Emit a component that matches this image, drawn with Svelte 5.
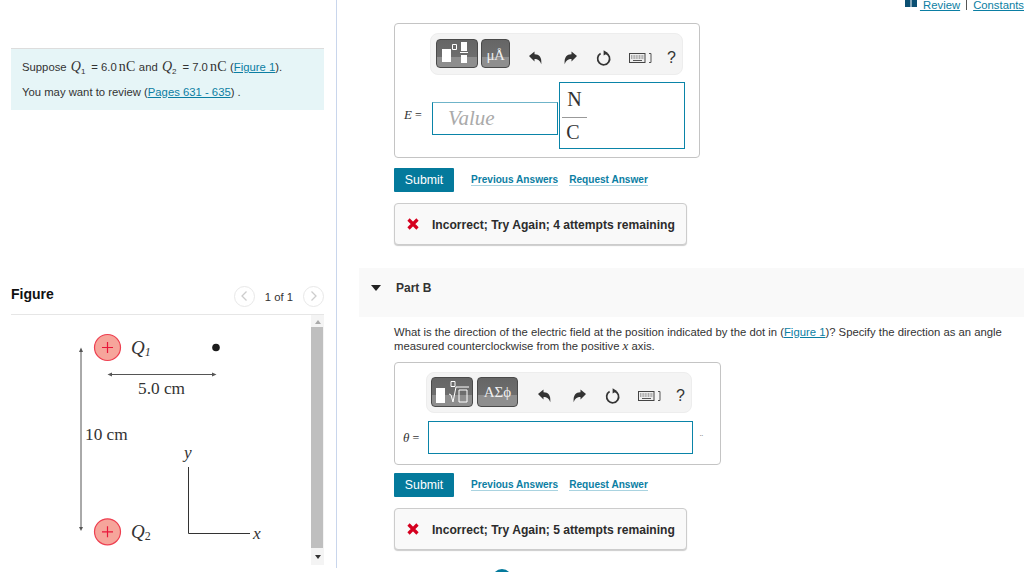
<script>
  const parts = [
    { attempts: 4 },
    { attempts: 5 }
  ];
</script>

{#snippet tools()}
  <svg class="tool" width="16" height="16" viewBox="0 0 16 16"><path d="M1 6 L6.500 1.500 V4.300 C11 4.200 14 7 13.300 14.200 C12 10.500 10 9 6.500 9 V11.500 Z" fill="#333"/></svg>
  <svg class="tool" width="16" height="16" viewBox="0 0 16 16"><path d="M15 6 L9.500 1.500 V4.300 C5 4.200 2 7 2.700 14.200 C4 10.500 6 9 9.500 9 V11.500 Z" fill="#333"/></svg>
  <svg class="tool" width="16" height="16" viewBox="0 0 16 16"><path d="M9.600 3.100 A6 6 0 1 1 4.600 3.600" fill="none" stroke="#333" stroke-width="1.700"/><path d="M7.600 .2 L12 3 L7.600 5.600 Z" fill="#333"/></svg>
  <svg class="kbd" width="24" height="12" viewBox="0 0 24 12">
    <rect x=".5" y="1.500" width="15.500" height="9" fill="#eee" stroke="#444"/>
    <path d="M2 4h13M2 6h13" stroke="#666" stroke-dasharray="1 .6"/>
    <path d="M4 8.500h9" stroke="#555"/>
    <path d="M20 1.500h2v9h-2" fill="none" stroke="#555"/>
  </svg>
  <span class="help">?</span>
{/snippet}

{#snippet answerRow(n)}
  <div class="actions">
    <button class="submit">Submit</button>
    <a href="#p" class="action">Previous Answers</a>
    <a href="#r" class="action">Request Answer</a>
  </div>
  <div class="feedback">
    <svg width="12" height="12" viewBox="0 0 12 12"><path d="M1.500 1.500 L10.500 10.500 M10.500 1.500 L1.500 10.500" stroke="#d5001f" stroke-width="3.200"/></svg>
    <span>Incorrect; Try Again; {n} attempts remaining</span>
  </div>
{/snippet}

<div class="page">
  <aside class="left">
    <div class="intro">
      <p>Suppose <i class="m q">Q</i><sub>1</sub><span class="eq">= 6.0</span><span class="u">nC</span> and <i class="m q">Q</i><sub>2</sub><span class="eq">= 7.0</span><span class="u">nC</span> (<a href="#f">Figure 1</a>).</p>
      <p>You may want to review (<a href="#pg">Pages 631 - 635</a>) .</p>
    </div>

    <div class="fighead">
      <h2>Figure</h2>
      <div class="pager">
        <span class="circ"><svg width="8" height="12" viewBox="0 0 8 12"><path d="M6.500 1.500 L2 6 L6.500 10.500" fill="none" stroke="#ccc" stroke-width="1.300"/></svg></span>
        <span class="count">1 of 1</span>
        <span class="circ"><svg width="8" height="12" viewBox="0 0 8 12"><path d="M1.500 1.500 L6 6 L1.500 10.500" fill="none" stroke="#ccc" stroke-width="1.300"/></svg></span>
      </div>
    </div>

    <div class="figure">
      <svg class="diagram" width="300" height="252" viewBox="11 314 300 252">
        <g stroke="#555" fill="#555">
          <path d="M81 349 V528" stroke-width="1" />
          <path d="M81 346.500 L79 351 H83 Z M81 530 L79 526 H83 Z" stroke="none"/>
          <path d="M109 373.500 H215" stroke-width="1"/>
          <path d="M107.500 373.500 L112 371.500 V375.500 Z M216.500 373.500 L212 371.500 V375.500 Z" stroke="none"/>
        </g>
        <circle cx="107.500" cy="346.500" r="13" fill="#f6a59b" stroke="#ee3f50" stroke-width="1.200"/>
        <path d="M102 346.500 H113 M107.500 341 V352" stroke="#e8173a" stroke-width="1.200"/>
        <circle cx="107.500" cy="530.800" r="13" fill="#f6a59b" stroke="#ee3f50" stroke-width="1.200"/>
        <path d="M102 530.800 H113 M107.500 525.300 V536.300" stroke="#e8173a" stroke-width="1.200"/>
        <circle cx="216" cy="346.500" r="3.800" fill="#1c1c1c"/>
        <path d="M188.500 466 V532.500 H250" fill="none" stroke="#333" stroke-width="1"/>
        <g class="dt">
          <text x="131" y="353" class="it big">Q<tspan class="sb" dy="2">1</tspan></text>
          <text x="131" y="537" class="it big">Q<tspan class="sb up2" dy="2">2</tspan></text>
          <text x="138" y="392.500" class="wider">5.0 cm</text>
          <text x="85" y="439" class="wider">10 cm</text>
          <text x="184" y="457" class="it wider">y</text>
          <text x="253" y="538" class="it wider">x</text>
        </g>
      </svg>
      <div class="scrollbar">
        <span class="up"></span>
        <span class="thumb"></span>
        <span class="down"></span>
      </div>
    </div>
  </aside>

  <main class="right">
    <div class="topbar">
      <svg width="12" height="8" viewBox="0 0 12 8"><path d="M0 0h5.500v7H0zM6.500 0H12v7H6.500z" fill="#0b4f72"/></svg>
      <a href="#rv" class="review">&nbsp;Review</a>
      <span class="sep"></span>
      <a href="#c">Constants</a>
    </div>

    <section class="content">
      <div class="answer a1">
        <div class="toolbar tb1">
          <span class="tbtn b42">
            <svg width="42" height="29" viewBox="0 0 42 29"><path d="M6 10h9v13H6zM25 3h6v9h-6z" fill="#fff"/><path d="M16.500 5.500h4v5h-4z" fill="none" stroke="#fff"/><path d="M24 13.500h8" stroke="#fff"/><path d="M25 16h6v8h-6z" fill="#fff"/></svg>
          </span>
          <span class="tbtn glyph g1 b29">μÅ</span>
          <div class="icons i1">{@render tools()}</div>
        </div>
        <div class="eqrow">
          <span class="eqlabel"><i class="m">E</i> =</span>
          <span class="field value">Value</span>
          <div class="units">
            <span class="frac"><span class="nu">N</span><span class="de">C</span></span>
          </div>
        </div>
      </div>
      {@render answerRow(parts[0].attempts)}
    </section>

    <section class="partb">
      <div class="band">
        <svg width="10" height="6" viewBox="0 0 10 6"><path d="M0 0h10L5 6z" fill="#222"/></svg>
        <span>Part B</span>
      </div>
      <div class="content">
        <div class="question">
          <p>What is the direction of the electric field at the position indicated by the dot in (<a href="#f1">Figure 1</a>)? Specify the direction as an angle</p>
          <p>measured counterclockwise from the positive <i class="m">x</i> axis.</p>
        </div>
        <div class="answer a2">
          <div class="toolbar tb2">
            <span class="tbtn b42">
              <svg width="42" height="30" viewBox="0 0 42 30"><path d="M5 11h9v15H5z" fill="#fff"/><path d="M20 4.500h4v5h-4z" fill="none" stroke="#fff"/><path d="M18 17l2 1 2 7 3-15h13M28 13h8v12h-8z" fill="none" stroke="#fff"/></svg>
            </span>
            <span class="tbtn glyph b41">ΑΣϕ</span>
            <div class="icons i2">{@render tools()}</div>
          </div>
          <div class="eqrow2">
            <span class="eqlabel"><i class="m">θ</i> =</span>
            <span class="field wide"></span>
            <span class="mark">¨</span>
          </div>
        </div>
        <div class="gap2">{@render answerRow(parts[1].attempts)}</div>
      </div>
    </section>
    <span class="peek"></span>
  </main>
</div>

<style>
  :global(body) { margin: 0; background: #fff; font-family: "Liberation Sans", Arial, sans-serif; color: #333; overflow: hidden; }
  a { color: #0b7ea3; text-decoration: underline; text-underline-offset: 1px; }
  p { margin: 0; }
  .page { display: flex; width: 1024px; height: 572px; overflow: hidden; }
  .left { width: 337px; height: 568px; flex: none; box-sizing: border-box; border-right: 1px solid #c9d6ec; padding: 48px 12px 0 11px; }
  .intro { background: #e6f5f7; border-top: 1px solid #ddd; height: 62px; box-sizing: border-box; padding: 11px 11px 0; font-size: 11.300px; }
  .intro p { height: 25px; line-height: 14px; white-space: nowrap; }
  .m { font-family: "Liberation Serif", serif; font-style: italic; font-size: 13px; }
  .q { font-size: 14px; margin-left: 1px; }
  .eq { margin-left: 6px; margin-right: 2px; }
  .u { font-family: "Liberation Serif", serif; font-size: 14px; letter-spacing: .3px; }
  sub { font-size: 8px; line-height: 0; }
  .fighead { display: flex; justify-content: space-between; align-items: center; height: 47px; margin-top: 158px; border-bottom: 1px solid #e6e6e6; box-sizing: border-box; }
  h2 { margin: 0; font-size: 14px; color: #111; line-height: 15px; padding-top: 6px; }
  .pager { display: flex; align-items: center; padding-top: 10px; font-size: 11.300px; gap: 10px; margin-left: -1px; }
  .count { margin-top: 2px; }
  .circ { width: 21px; height: 21px; box-sizing: border-box; border: 1px solid #e8e8e8; border-radius: 50%; display: flex; align-items: center; justify-content: center; }
  .figure { display: flex; height: 252px; }
  .diagram { flex: none; display: block; }
  .dt text { font-family: "Liberation Serif", serif; font-size: 16.500px; fill: #333; }
  .dt .wider { font-size: 17.300px; }
  .dt .it { font-style: italic; }
  .dt .big { font-size: 19px; }
  .dt .sb { font-size: 12px; }
  .dt .up2 { font-style: normal; }
  .scrollbar { width: 13px; background: #f4f4f4; display: flex; flex-direction: column; align-items: center; height: 250px; }
  .thumb { flex: 1; width: 12px; background: #bfbfbf; margin: 3px 0 3px; align-self: flex-start; }
  .up, .down { width: 0; height: 0; border: 3px solid transparent; margin: 4px 0 0; }
  .up { border-bottom: 4px solid #aaa; border-top: 0; margin-top: 5px; }
  .down { border-top: 4px solid #333; border-bottom: 0; margin: 4px 0 6px; }

  .right { position: relative; flex: 1; min-width: 0; }
  .topbar { height: 23px; display: flex; justify-content: flex-end; align-items: flex-start; font-size: 11.300px; line-height: 10px; white-space: nowrap; }
  .topbar svg { margin-right: 3px; }
  .topbar a { color: #0b7ea3; }
  .sep { width: 1px; height: 10px; background: #555; margin: 0 6px; }
  .content { margin-left: 57px; }
  .answer { box-sizing: border-box; border: 1px solid #c4c4c4; border-radius: 4px; }
  .a1 { width: 306px; height: 135px; padding: 9px 0 0 35px; position: relative; }
  .a2 { width: 327px; height: 103px; padding: 9px 0 0 31px; }
  .toolbar { box-sizing: border-box; height: 42px; background: #f4f4f4; border: 1px solid #ededed; border-radius: 8px; display: flex; align-items: center; padding-left: 5px; gap: 3px; }
  .tb1 { width: 253px; }
  .tb2 { width: 266px; height: 41px; padding-left: 4px; gap: 4px; }
  .tbtn { box-sizing: border-box; height: 29px; border-radius: 4px; border: 1px solid #4a4a4a; background: linear-gradient(#656565 0, #6e6e6e 62%, #8e8e8e 62%, #8e8e8e 100%); color: #f0f0f0; display: flex; align-items: center; justify-content: center; position: relative; overflow: hidden; margin-top: -1px; }
  .tbtn svg { position: absolute; left: -1px; top: -1px; }
  .b42 { width: 42px; }
  .b29 { width: 29px; }
  .b41 { width: 41px; }
  .tb2 .tbtn { height: 30px; }
  .glyph { font-family: "Liberation Serif", serif; font-size: 15px; white-space: nowrap; }
  .g1 { padding-top: 3px; letter-spacing: -.5px; }
  .icons { display: flex; align-items: center; margin-top: 7px; }
  .i1 { margin-left: 15px; }
  .i2 { margin-left: 15px; }
  .tool { margin-right: 18px; flex: none; }
  .kbd { margin-left: -1px; margin-right: 13px; flex: none; }
  .help { font-size: 16px; color: #333; margin-left: 1px; }
  .eqrow { display: flex; position: absolute; left: 9px; top: 58px; align-items: flex-start; }
  .eqlabel { font-family: "Liberation Serif", serif; font-size: 12px; white-space: nowrap; }
  .eqrow .eqlabel { width: 28px; margin-top: 25px; }
  .field { box-sizing: border-box; display: block; border: 1px solid #0a84a8; }
  .value { width: 126px; height: 33px; margin-top: 20px; font-family: "Liberation Serif", serif; font-style: italic; font-size: 21px; color: #aaa; padding: 3px 0 0 15px; border-top-color: #6fb4c9; }
  .units { box-sizing: border-box; width: 126px; height: 67px; border: 1px solid #0a84a8; margin-left: 1px; padding: 1px 0 0 1px; }
  .frac { display: inline-flex; flex-direction: column; width: 25px; margin-left: 1px; font-family: "Liberation Serif", serif; font-size: 20px; color: #333; align-items: center; }
  .nu { height: 33px; line-height: 31px; width: 100%; text-align: center; border-bottom: 1px solid #999; }
  .de { line-height: 28px; margin-left: -3px; }
  .actions { display: flex; align-items: center; margin-top: 10px; height: 24px; gap: 11px; }
  .submit { width: 60px; height: 24px; padding: 0; border: 0; border-radius: 1px; background: #047a9c; color: #fff; font: 12.300px "Liberation Sans", sans-serif; margin-right: 6px; }
  .action { font-size: 10.100px; font-weight: bold; text-decoration: none; border-bottom: 1px solid #a9d3e0; line-height: 11px; }
  .feedback { box-sizing: border-box; width: 293px; height: 42px; margin-top: 11px; background: #f9f9f9; border: 1px solid #ccc; border-radius: 4px; box-shadow: 0 1px 1px #ccc; display: flex; align-items: center; padding: 2px 0 0 12px; gap: 13px; font-size: 12.100px; font-weight: bold; color: #2c2c2c; white-space: nowrap; }
  .feedback svg { margin-top: -2px; }
  .partb { margin-top: 23px; }
  .band { margin-left: 22px; height: 49px; background: #f9f9f9; display: flex; align-items: flex-start; padding: 14px 0 0 12px; box-sizing: border-box; gap: 15px; font-size: 12px; font-weight: bold; line-height: 13px; }
  .band svg { margin-top: 3px; }
  .question { font-size: 11.300px; line-height: 14px; padding-top: 8px; height: 45px; box-sizing: border-box; white-space: nowrap; }
  .eqrow2 { display: flex; align-items: center; margin: 8px 0 0 -23px; }
  .eqrow2 .eqlabel { width: 25px; }
  .wide { width: 265px; height: 33px; }
  .mark { font-size: 9px; color: #888; margin-left: 7px; }
  .gap2 { margin-top: -2px; }
  .peek { position: absolute; left: 155px; top: 569px; width: 20px; height: 20px; border-radius: 50%; background: #047a9c; }
</style>
